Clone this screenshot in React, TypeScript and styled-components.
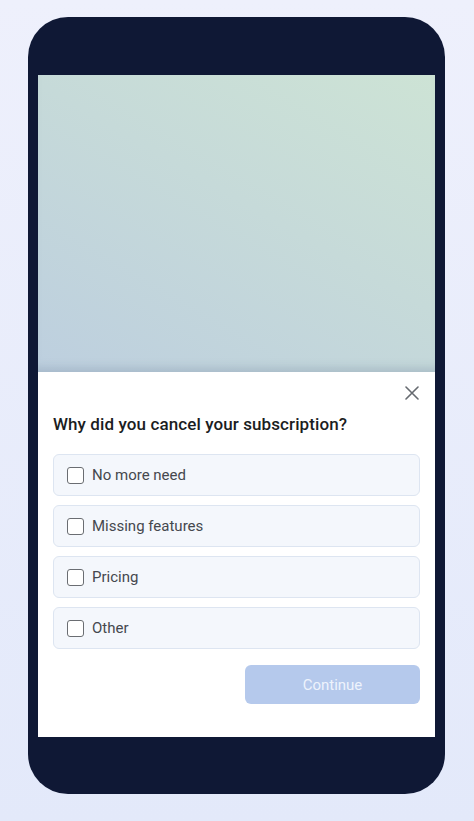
import React, { useState } from "react";
import styled, { createGlobalStyle } from "styled-components";

const GlobalStyle = createGlobalStyle`
  html, body {
    margin: 0;
    padding: 0;
  }
  body {
    font-family: Roboto, "Noto Sans", "Liberation Sans", sans-serif;
    background: linear-gradient(180deg, #eef0fc 0%, #e3e9fa 100%);
    min-height: 821px;
  }
`;

const reasons = ["No more need", "Missing features", "Pricing", "Other"];

function App() {
  const [checked, setChecked] = useState<string[]>([]);

  const toggle = (r: string) =>
    setChecked((c) => (c.includes(r) ? c.filter((x) => x !== r) : [...c, r]));

  return (
    <>
      <GlobalStyle />
      <StPage>
        <StPhone>
          <StScreen>
            <StHero />
            <StSheet>
              <StCloseRow>
                <StClose aria-label="Close">
                  <svg width="14" height="14" viewBox="0 0 14 14">
                    <path
                      d="M1 1 L13 13 M13 1 L1 13"
                      stroke="#666a70"
                      strokeWidth="1.6"
                      strokeLinecap="round"
                    />
                  </svg>
                </StClose>
              </StCloseRow>
              <StTitle>Why did you cancel your subscription?</StTitle>
              <StOptions>
                {reasons.map((r) => (
                  <StOption key={r} onClick={() => toggle(r)}>
                    <StCheck $on={checked.includes(r)} />
                    <span>{r}</span>
                  </StOption>
                ))}
              </StOptions>
              <StFooter>
                <StButton disabled={checked.length === 0}>Continue</StButton>
              </StFooter>
            </StSheet>
          </StScreen>
        </StPhone>
      </StPage>
    </>
  );
}

export default App;

const StPage = styled.div`
  padding: 17px 29px 27px 28px;
`;

const StPhone = styled.div`
  width: 417px;
  height: 777px;
  box-sizing: border-box;
  padding: 58px 10px 57px 10px;
  background: #0f1835;
  border-radius: 40px;
  display: flex;
`;

const StScreen = styled.div`
  flex: 1;
  display: flex;
  flex-direction: column;
  background: #ffffff;
  overflow: hidden;
`;

const StHero = styled.div`
  height: 297px;
  flex-shrink: 0;
  background: linear-gradient(
    210deg,
    #cde3d5 0%,
    #c6dad9 45%,
    #bdcfdf 100%
  );
  box-shadow: inset 0 -10px 10px -6px rgba(120, 140, 160, 0.35);
`;

const StSheet = styled.div`
  flex: 1;
  display: flex;
  flex-direction: column;
  padding: 12px 15px 0 15px;
`;

const StCloseRow = styled.div`
  display: flex;
  justify-content: flex-end;
`;

const StClose = styled.button`
  background: none;
  border: none;
  padding: 0;
  width: 18px;
  height: 18px;
  display: flex;
  align-items: center;
  justify-content: center;
  cursor: pointer;
  margin-right: -1px;
`;

const StTitle = styled.div`
  margin-top: 12px;
  font-size: 17px;
  font-weight: 500;
  color: #1b1d22;
  letter-spacing: 0.1px;
`;

const StOptions = styled.div`
  display: flex;
  flex-direction: column;
  gap: 9px;
  margin-top: 20px;
`;

const StOption = styled.div`
  height: 42px;
  box-sizing: border-box;
  display: flex;
  align-items: center;
  gap: 8px;
  padding: 0 13px;
  background: #f4f7fc;
  border: 1px solid #dde5f1;
  border-radius: 6px;
  font-size: 15px;
  color: #45484e;
  cursor: pointer;
`;

const StCheck = styled.span<{ $on: boolean }>`
  width: 17px;
  height: 17px;
  box-sizing: border-box;
  border: 1.5px solid #6a6d72;
  border-radius: 3px;
  background: ${(p) => (p.$on ? "#6a8fd8" : "#ffffff")};
`;

const StFooter = styled.div`
  display: flex;
  justify-content: flex-end;
  margin-top: 16px;
`;

const StButton = styled.button`
  width: 175px;
  height: 39px;
  border: none;
  border-radius: 6px;
  background: #b5c9ec;
  color: #eef3fc;
  font-family: Roboto, "Noto Sans", sans-serif;
  font-size: 15px;
  font-weight: 400;
`;
